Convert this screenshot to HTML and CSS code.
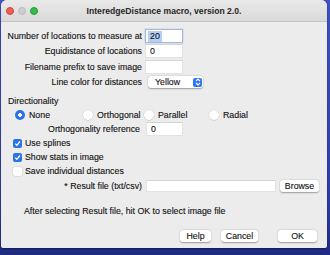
FILE: index.html
```html
<!DOCTYPE html>
<html>
<head>
<meta charset="utf-8">
<link rel="stylesheet" href="styles.css">
</head>
<body>
<div class="window">
  <div class="titlebar">
    <div class="lights">
      <span class="light red"></span>
      <span class="light grey"></span>
      <span class="light green"></span>
    </div>
    <div class="title">InteredgeDistance macro, version 2.0.</div>
    <div></div>
  </div>
  <div class="content">
    <div class="form">
      <label class="lbl">Number of locations to measure at</label>
      <div class="field focus"><span class="sel">20</span></div>
      <label class="lbl">Equidistance of locations</label>
      <div class="field">0</div>
      <label class="lbl">Filename prefix to save image</label>
      <div class="field"></div>
      <label class="lbl">Line color for distances</label>
      <div class="popup"><span>Yellow</span><span class="stepper"><svg width="6" height="8" viewBox="0 0 6 8"><path d="M1 3 L3 1 L5 3 M1 5 L3 7 L5 5" fill="none" stroke="#fff" stroke-width="1.1"/></svg></span></div>
    </div>

    <div class="section">Directionality</div>
    <div class="radios">
      <div class="radio on"><span class="dot"></span>None</div>
      <div class="radio"><span class="dot"></span>Orthogonal</div>
      <div class="radio"><span class="dot"></span>Parallel</div>
      <div class="radio"><span class="dot"></span>Radial</div>
    </div>
    <div class="form ortho">
      <label class="lbl">Orthogonality reference</label>
      <div class="field">0</div>
    </div>

    <div class="checks">
      <div class="check on"><span class="box"><svg width="7" height="7" viewBox="0 0 7 7"><path d="M1.2 3.6 L2.9 5.3 L5.9 1.5" fill="none" stroke="#fff" stroke-width="1.3"/></svg></span>Use splines</div>
      <div class="check on"><span class="box"><svg width="7" height="7" viewBox="0 0 7 7"><path d="M1.2 3.6 L2.9 5.3 L5.9 1.5" fill="none" stroke="#fff" stroke-width="1.3"/></svg></span>Show stats in image</div>
      <div class="check"><span class="box"></span>Save individual distances</div>
    </div>

    <div class="result">
      <label class="lbl">* Result file (txt/csv)</label>
      <div class="field wide"></div>
      <button class="btn browse">Browse</button>
    </div>

    <div class="note">After selecting Result file, hit OK to select image file</div>

    <div class="buttons">
      <button class="btn help">Help</button>
      <button class="btn cancel">Cancel</button>
      <button class="btn ok">OK</button>
    </div>
  </div>
</div>
</body>
</html>
```
FILE: styles.css
```css
html, body {
  margin: 0;
  padding: 0;
}
body {
  width: 330px;
  height: 255px;
  overflow: hidden;
  background: linear-gradient(180deg, #3f52c6 0%, #2c3da8 80%, #1f2b82 100%);
  font-family: "Liberation Sans", Arial, sans-serif;
  font-size: 8.8px;
  color: #111;
  -webkit-text-stroke: 0.12px #111;
}
.window {
  margin-left: 1px;
  width: 326px;
  height: 248px;
  background: #ececec;
  border-radius: 6px 6px 2px 2px;
  overflow: hidden;
  box-shadow: 0 1px 2px rgba(0,0,0,0.45);
}
.titlebar {
  height: 21px;
  display: grid;
  grid-template-columns: 1fr auto 1fr;
  align-items: center;
  background: linear-gradient(180deg, #e9e9e9 0%, #d9d9d9 100%);
  border-bottom: 1px solid #c4c4c4;
}
.lights {
  display: flex;
  gap: 4px;
  padding-left: 5px;
}
.light {
  width: 8px;
  height: 8px;
  border-radius: 50%;
  display: block;
  box-sizing: border-box;
}
.red { background: #ec5f58; border: 0.5px solid #d3473f; }
.grey { background: #cdcdcd; border: 0.5px solid #bdbdbd; }
.green { background: #35b94a; border: 0.5px solid #2a9c3c; }
.title {
  font-weight: bold;
  font-size: 8.6px;
  color: #262626;
  -webkit-text-stroke: 0;
}
.content {
  padding-top: 7px;
}
.form {
  display: grid;
  grid-template-columns: 141px 38px;
  column-gap: 3px;
  grid-auto-rows: 14px;
  row-gap: 1.4px;
  align-items: center;
}
.lbl {
  text-align: right;
  white-space: nowrap;
}
.field {
  height: 14px;
  box-sizing: border-box;
  background: #fff;
  border: 1px solid #e2e2e2;
  border-top-color: #d4d4d4;
  padding-left: 4px;
  line-height: 12px;
}
.field.focus {
  border: 1px solid #a9b8d0;
  box-shadow: 0 0 0 0.5px #c6d4ea;
  padding-left: 2px;
}
.sel {
  background: #b2cff5;
  padding: 0 2px;
  display: inline-block;
  line-height: 11px;
}
.popup {
  margin-left: 3px;
  width: 55px;
  height: 12px;
  box-sizing: border-box;
  background: #fff;
  border-radius: 3px;
  box-shadow: 0 0.5px 1.5px rgba(0,0,0,0.35);
  display: flex;
  align-items: center;
  justify-content: space-between;
  padding: 0 1px 0 7px;
}
.stepper {
  width: 9px;
  height: 9px;
  border-radius: 2px;
  background: #2b78ee;
  display: flex;
  align-items: center;
  justify-content: center;
}
.section {
  margin-top: 6px;
  padding-left: 7px;
  height: 12px;
  line-height: 12px;
}
.radios {
  margin-top: 2px;
  height: 12px;
  padding-left: 14px;
  display: grid;
  grid-template-columns: 68px 61px 65px auto;
  align-items: center;
}
.radio {
  display: flex;
  align-items: center;
  gap: 4px;
}
.dot {
  width: 10px;
  height: 10px;
  box-sizing: border-box;
  border-radius: 50%;
  background: #fff;
  box-shadow: 0 0 0 0.5px #d0d0d0, 0 0.5px 1px rgba(0,0,0,0.12);
  display: block;
}
.radio.on .dot {
  background: radial-gradient(circle, #fff 0 1.7px, #2a74ea 2px);
  box-shadow: none;
}
.ortho {
  margin-top: 1px;
  grid-template-columns: 139px 37px;
  column-gap: 6px;
}
.checks {
  margin-top: 0;
  padding-left: 12px;
  display: grid;
  grid-auto-rows: 14px;
  align-items: center;
}
.check {
  display: flex;
  align-items: center;
  gap: 3px;
}
.box {
  width: 9px;
  height: 9px;
  box-sizing: border-box;
  border-radius: 2px;
  background: #fff;
  box-shadow: 0 0 0 0.5px #d0d0d0;
  display: flex;
  align-items: center;
  justify-content: center;
}
.check.on .box {
  background: #2a74ea;
  box-shadow: none;
}
.result {
  margin-top: 1px;
  height: 13px;
  display: grid;
  grid-template-columns: 141px 130px 39px;
  column-gap: 4px;
  align-items: center;
}
.field.wide {
  height: 12px;
  width: 130px;
}
.btn {
  font-family: inherit;
  font-size: 8.8px;
  color: #111;
  -webkit-text-stroke: 0.12px #111;
  background: #fff;
  border: none;
  border-radius: 3px;
  box-shadow: 0 0.5px 1.5px rgba(0,0,0,0.35);
  height: 12px;
  padding: 0;
  margin: 0;
  line-height: 12px;
  text-align: center;
}
.browse {
  width: 39px;
}
.note {
  margin-top: 13px;
  padding-left: 23px;
  height: 12px;
  line-height: 12px;
}
.buttons {
  margin-top: 13px;
  display: flex;
  padding-left: 179px;
  gap: 10px;
}
.help { width: 31px; }
.cancel { width: 37px; margin-right: 10px; }
.ok { width: 39px; }
```
